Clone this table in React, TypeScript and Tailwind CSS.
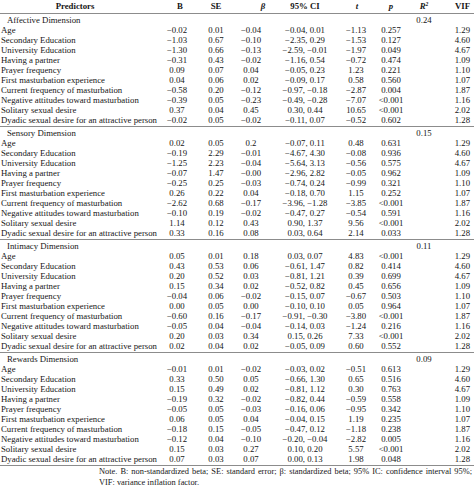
import React from 'react';

const predictors = [
  'Age',
  'Secondary Education',
  'University Education',
  'Having a partner',
  'Prayer frequency',
  'First masturbation experience',
  'Current frequency of masturbation',
  'Negative attitudes toward masturbation',
  'Solitary sexual desire',
  'Dyadic sexual desire for an attractive person',
];

// B, SE, beta, 95% CI, t, p, VIF (R² sits on the dimension row)
const sections: { title: string; r2: string; rows: string[][] }[] = [
  {
    title: 'Affective Dimension',
    r2: '0.24',
    rows: [
      ['-0.02', '0.01', '-0.04', '-0.04, 0.01', '-1.13', '0.257', '1.29'],
      ['-1.03', '0.67', '-0.10', '-2.35, 0.29', '-1.53', '0.127', '4.60'],
      ['-1.30', '0.66', '-0.13', '-2.59, -0.01', '-1.97', '0.049', '4.67'],
      ['-0.31', '0.43', '-0.02', '-1.16, 0.54', '-0.72', '0.474', '1.09'],
      ['0.09', '0.07', '0.04', '-0.05, 0.23', '1.23', '0.221', '1.10'],
      ['0.04', '0.06', '0.02', '-0.09, 0.17', '0.58', '0.560', '1.07'],
      ['-0.58', '0.20', '-0.12', '-0.97, -0.18', '-2.87', '0.004', '1.87'],
      ['-0.39', '0.05', '-0.23', '-0.49, -0.28', '-7.07', '<0.001', '1.16'],
      ['0.37', '0.04', '0.45', '0.30, 0.44', '10.65', '<0.001', '2.02'],
      ['-0.02', '0.05', '-0.02', '-0.11, 0.07', '-0.52', '0.602', '1.28'],
    ],
  },
  {
    title: 'Sensory Dimension',
    r2: '0.15',
    rows: [
      ['0.02', '0.05', '0.2', '-0.07, 0.11', '0.48', '0.631', '1.29'],
      ['-0.19', '2.29', '-0.01', '-4.67, 4.30', '-0.08', '0.936', '4.60'],
      ['-1.25', '2.23', '-0.04', '-5.64, 3.13', '-0.56', '0.575', '4.67'],
      ['-0.07', '1.47', '-0.00', '-2.96, 2.82', '-0.05', '0.962', '1.09'],
      ['-0.25', '0.25', '-0.03', '-0.74, 0.24', '-0.99', '0.321', '1.10'],
      ['0.26', '0.22', '0.04', '-0.18, 0.70', '1.15', '0.252', '1.07'],
      ['-2.62', '0.68', '-0.17', '-3.96, -1.28', '-3.85', '<0.001', '1.87'],
      ['-0.10', '0.19', '-0.02', '-0.47, 0.27', '-0.54', '0.591', '1.16'],
      ['1.14', '0.12', '0.43', '0.90, 1.37', '9.56', '<0.001', '2.02'],
      ['0.33', '0.16', '0.08', '0.03, 0.64', '2.14', '0.033', '1.28'],
    ],
  },
  {
    title: 'Intimacy Dimension',
    r2: '0.11',
    rows: [
      ['0.05', '0.01', '0.18', '0.03, 0.07', '4.83', '<0.001', '1.29'],
      ['0.43', '0.53', '0.06', '-0.61, 1.47', '0.82', '0.414', '4.60'],
      ['0.20', '0.52', '0.03', '-0.81, 1.21', '0.39', '0.699', '4.67'],
      ['0.15', '0.34', '0.02', '-0.52, 0.82', '0.45', '0.656', '1.09'],
      ['-0.04', '0.06', '-0.02', '-0.15, 0.07', '-0.67', '0.503', '1.10'],
      ['0.00', '0.05', '0.00', '-0.10, 0.10', '0.05', '0.964', '1.07'],
      ['-0.60', '0.16', '-0.17', '-0.91, -0.30', '-3.80', '<0.001', '1.87'],
      ['-0.05', '0.04', '-0.04', '-0.14, 0.03', '-1.24', '0.216', '1.16'],
      ['0.20', '0.03', '0.34', '0.15, 0.26', '7.33', '<0.001', '2.02'],
      ['0.02', '0.04', '0.02', '-0.05, 0.09', '0.60', '0.552', '1.28'],
    ],
  },
  {
    title: 'Rewards Dimension',
    r2: '0.09',
    rows: [
      ['-0.01', '0.01', '-0.02', '-0.03, 0.02', '-0.51', '0.613', '1.29'],
      ['0.33', '0.50', '0.05', '-0.66, 1.30', '0.65', '0.516', '4.60'],
      ['0.15', '0.49', '0.02', '-0.81, 1.12', '0.30', '0.763', '4.67'],
      ['-0.19', '0.32', '-0.02', '-0.82, 0.44', '-0.59', '0.558', '1.09'],
      ['-0.05', '0.05', '-0.03', '-0.16, 0.06', '-0.95', '0.342', '1.10'],
      ['0.06', '0.05', '0.04', '-0.04, 0.15', '1.19', '0.235', '1.07'],
      ['-0.18', '0.15', '-0.05', '-0.47, 0.12', '-1.18', '0.238', '1.87'],
      ['-0.12', '0.04', '-0.10', '-0.20, -0.04', '-2.82', '0.005', '1.16'],
      ['0.15', '0.03', '0.27', '0.10, 0.20', '5.57', '<0.001', '2.02'],
      ['0.07', '0.03', '0.07', '0.00, 0.13', '1.98', '0.048', '1.28'],
    ],
  },
];

const minus = (s: string) => s.replace(/-/g, '\u2212');

const grid = 'grid grid-cols-[150px_54px_24px_46px_62px_40px_30px_36px_32px] h-[10px] leading-[10px] whitespace-nowrap';

const DataRow: React.FC<{ name: string; v: string[] }> = ({ name, v }) => (
  <div className={grid}>
    <div className="pl-[1px]">{name}</div>
    <div className="text-center">{minus(v[0])}</div>
    <div className="text-center">{minus(v[1])}</div>
    <div className="text-center">{minus(v[2])}</div>
    <div className="text-center">{minus(v[3])}</div>
    <div className="text-center">{minus(v[4])}</div>
    <div className="text-center">{v[5]}</div>
    <div />
    <div className="text-right pr-[4px]">{v[6]}</div>
  </div>
);

export default function App() {
  return (
    <div
      className="w-[474px] h-[489px] bg-white text-[#161616] text-[8.75px] overflow-hidden"
      style={{ fontFamily: "'Liberation Serif', 'Times New Roman', serif" }}
    >
      <div className={`${grid} h-[13px] leading-[12px] font-bold border-b-[1.5px] border-[#8c8c8c] box-content`}>
        <div className="text-center">Predictors</div>
        <div className="text-center pl-[6px]">B</div>
        <div className="text-center">SE</div>
        <div className="text-center pl-[24px] italic">β</div>
        <div className="text-center">95% CI</div>
        <div className="text-center italic pl-[2px]">t</div>
        <div className="text-center italic">p</div>
        <div className="text-center italic">
          R<sup className="text-[5.5px]">2</sup>
        </div>
        <div className="text-right pr-[4px]">VIF</div>
      </div>

      {sections.map((s) => (
        <div key={s.title} className="pt-[1px] pb-[1px] border-b border-[#8c8c8c]">
          <div className={grid}>
            <div className="pl-[7px]">{s.title}</div>
            <div />
            <div />
            <div />
            <div />
            <div />
            <div />
            <div className="text-center">{s.r2}</div>
            <div />
          </div>
          {s.rows.map((r, i) => (
            <DataRow key={i} name={predictors[i]} v={r} />
          ))}
        </div>
      ))}

      <div className="pl-[99px] pr-[2px] pt-[1px] text-[8.4px] leading-[10.5px]">
        <div className="whitespace-nowrap text-justify [text-align-last:justify]">
          Note. B: non-standardized beta; SE: standard error; β: standardized beta; 95% IC: confidence interval 95%;
        </div>
        <div>VIF: variance inflation factor.</div>
      </div>
    </div>
  );
}
